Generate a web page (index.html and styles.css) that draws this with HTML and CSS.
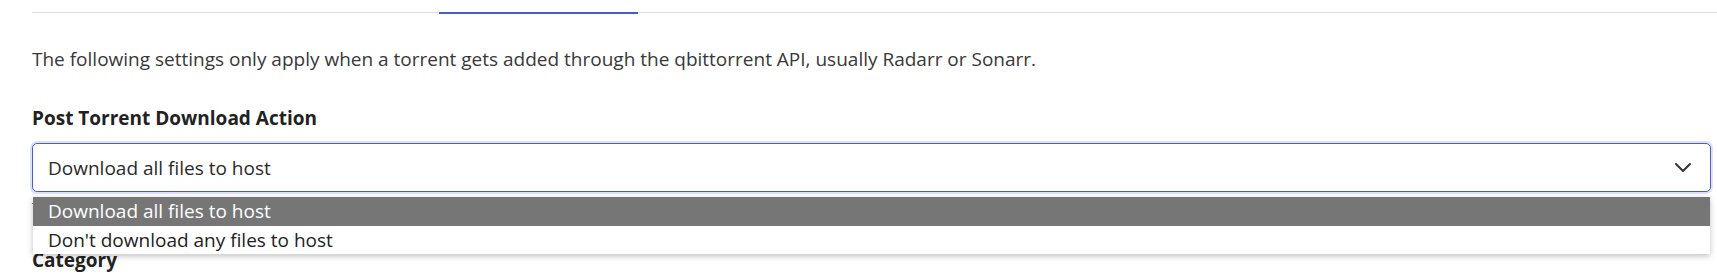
FILE: index.html
```html
<!DOCTYPE html>
<html lang="en">
<head>
    <meta charset="UTF-8">
    <meta name="viewport" content="width=device-width, initial-scale=1.0">
    <title>qBittorrent settings</title>
    <link rel="stylesheet" href="styles.css">
</head>
<body>
    <div class="page">
        <nav class="tabs">
            <div class="tab" style="width: 407px"></div>
            <div class="tab active" style="width: 199px"></div>
        </nav>

        <div class="settings">
            <p class="intro">The following settings only apply when a torrent gets added through the qbittorrent API, usually Radarr or Sonarr.</p>

            <div class="field">
                <label class="field-label">Post Torrent Download Action</label>
                <div class="select-wrap">
                    <div class="select focused">
                        <span class="select-value">Download all files to host</span>
                        <svg class="chevron" width="16" height="9" viewBox="0 0 16 9">
                            <path d="M1 1 L8 8 L15 1" fill="none" stroke="#333" stroke-width="2" stroke-linecap="round" stroke-linejoin="round"/>
                        </svg>
                    </div>
                    <ul class="options">
                        <li class="option selected">Download all files to host</li>
                        <li class="option">Don't download any files to host</li>
                    </ul>
                </div>
                <p class="help">The files of the torrent are downloaded to the host after it finishes.</p>
            </div>

            <div class="field">
                <label class="field-label">Category</label>
            </div>
        </div>
    </div>
</body>
</html>
```

FILE: styles.css
```css
* {
    margin: 0;
    padding: 0;
    box-sizing: border-box;
}

body {
    background: #fff;
    font-family: 'Open Sans', 'Noto Sans', sans-serif;
    color: #333;
    overflow: hidden;
}

.page {
    padding-left: 32px;
}

.tabs {
    display: flex;
    height: 13px;
    border-bottom: 1px solid #dcdcdc;
}

.tab {
    height: 12px;
}

.tab.active {
    height: 14px;
    border-bottom: 2px solid #4a5bd1;
}

.settings {
    padding-right: 6px;
}

.intro {
    margin-top: 32px;
    font-size: 19px;
    line-height: 28px;
    color: #383838;
}

.field {
    margin-top: 31px;
}

.field-label {
    display: block;
    font-size: 19px;
    font-weight: 700;
    line-height: 28px;
    color: #222;
}

.select-wrap {
    position: relative;
    margin-top: 11px;
}

.select {
    display: flex;
    align-items: center;
    justify-content: space-between;
    height: 49px;
    padding: 0 19px 0 15px;
    border: 1px solid #8a8a8a;
    border-radius: 5px;
    background: #fff;
}

.select.focused {
    border-color: #4c5cd0;
    box-shadow: 0 0 0 2px rgba(76, 92, 208, 0.18);
}

.select-value {
    font-size: 19px;
    line-height: 28px;
    color: #2a2a2a;
}

.options {
    position: absolute;
    top: 54px;
    left: 1px;
    right: 1px;
    list-style: none;
    background: #fff;
    box-shadow: 0 2px 6px rgba(0, 0, 0, 0.25);
    z-index: 2;
}

.option {
    height: 28.5px;
    padding-left: 15px;
    font-size: 19px;
    line-height: 28.5px;
    color: #222;
}

.option.selected {
    background: #767676;
    color: #fff;
}

.help {
    margin-top: 4px;
    font-size: 15px;
    line-height: 22px;
    color: #555;
}

.field + .field {
    margin-top: 28px;
}
```
